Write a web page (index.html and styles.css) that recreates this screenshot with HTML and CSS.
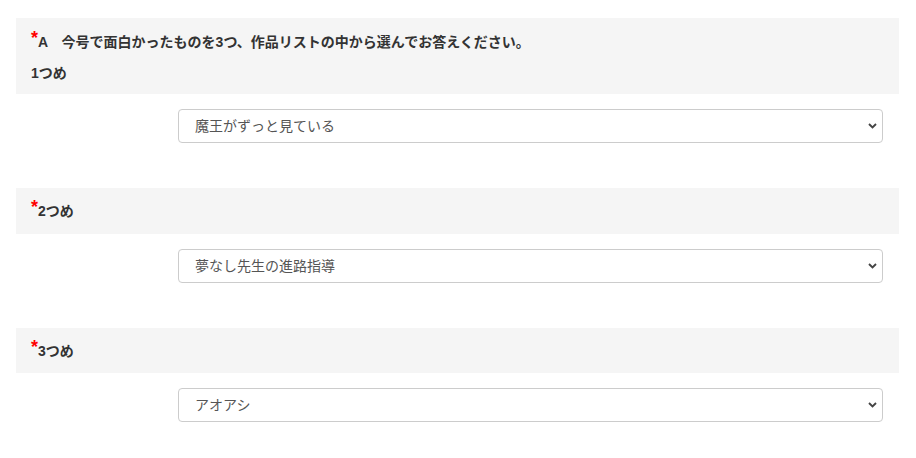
FILE: index.html
```html
<!DOCTYPE html>
<html lang="ja">
<head>
<meta charset="utf-8">
<link rel="stylesheet" href="styles.css">
</head>
<body>
<div class="form">
  <div class="q-head">
    <div class="q-line"><span class="req">*</span>A　今号で面白かったものを3つ、作品リストの中から選んでお答えください。</div>
    <div class="q-line q-sub">1つめ</div>
  </div>
  <div class="answer">
    <div class="select-wrap">
      <select class="select"><option>魔王がずっと見ている</option></select>
      <svg class="chev" width="9" height="6" viewBox="0 0 9 6"><path d="M1 1 L4.5 4.5 L8 1" fill="none" stroke="#444" stroke-width="1.9"/></svg>
    </div>
  </div>

  <div class="q-head single">
    <div class="q-line"><span class="req">*</span>2つめ</div>
  </div>
  <div class="answer">
    <div class="select-wrap">
      <select class="select"><option>夢なし先生の進路指導</option></select>
      <svg class="chev" width="9" height="6" viewBox="0 0 9 6"><path d="M1 1 L4.5 4.5 L8 1" fill="none" stroke="#444" stroke-width="1.9"/></svg>
    </div>
  </div>

  <div class="q-head single">
    <div class="q-line"><span class="req">*</span>3つめ</div>
  </div>
  <div class="answer">
    <div class="select-wrap">
      <select class="select"><option>アオアシ</option></select>
      <svg class="chev" width="9" height="6" viewBox="0 0 9 6"><path d="M1 1 L4.5 4.5 L8 1" fill="none" stroke="#444" stroke-width="1.9"/></svg>
    </div>
  </div>
</div>
</body>
</html>
```

FILE: styles.css
```css
html, body {
  margin: 0;
  padding: 0;
  background: #fff;
}
body {
  font-family: "Liberation Sans", "Noto Sans CJK JP", sans-serif;
  font-size: 14px;
  color: #333;
}
.form {
  padding: 18px 17px 0 16px;
}
.q-head {
  background: #f5f5f5;
  padding: 14px 15px 11px;
  font-weight: bold;
}
.q-head.single {
  padding: 13px 15px 12.5px;
}
.q-line {
  line-height: 20px;
  height: 20px;
  white-space: nowrap;
}
.q-sub {
  margin-top: 11px;
}
.req {
  color: #f00;
  font-size: 18px;
  line-height: 0;
  vertical-align: 3px;
}
.answer {
  display: flex;
  padding: 15px 16px 45px 162px;
}
.select-wrap {
  position: relative;
  flex: 1;
}
.select {
  display: block;
  width: 100%;
  height: 34px;
  margin: 0;
  border: 1px solid #ccc;
  border-radius: 4px;
  padding: 0 16px;
  background: #fff;
  color: #555;
  font-family: "Liberation Sans", "Noto Sans CJK JP", sans-serif;
  font-size: 14px;
  -webkit-appearance: none;
  appearance: none;
  outline: none;
}
.chev {
  position: absolute;
  right: 6px;
  top: 14px;
  pointer-events: none;
}
```
